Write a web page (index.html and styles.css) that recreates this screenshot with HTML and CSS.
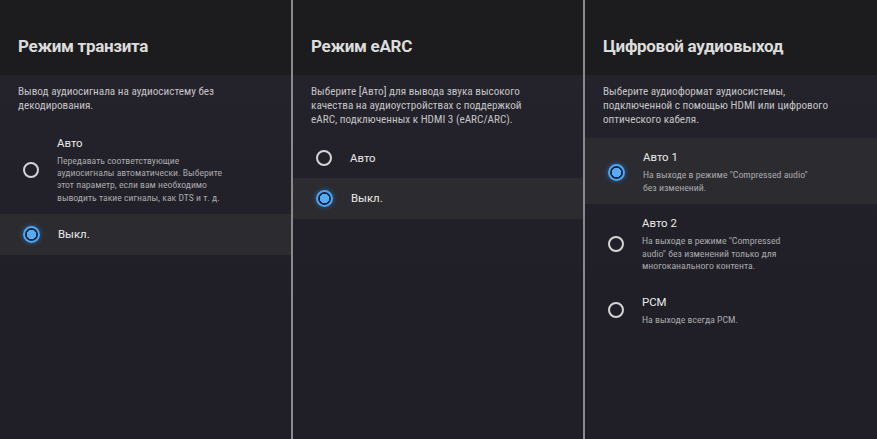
FILE: index.html
```html
<!DOCTYPE html>
<html lang="ru">
<head>
<meta charset="utf-8">
<title>Audio settings</title>
<link rel="stylesheet" href="styles.css">
</head>
<body>
<div class="screen">
  <section class="panel">
    <header class="panel-head"><h1 class="title">Режим транзита</h1></header>
    <div class="panel-body">
      <p class="desc">Вывод аудиосигнала на аудиосистему без<br>декодирования.</p>
      <ul class="options">
        <li class="option">
          <span class="radio"></span>
          <div class="opt-text">
            <div class="label">Авто</div>
            <div class="sub sub-tight">Передавать соответствующие<br>аудиосигналы автоматически. Выберите<br>этот параметр, если вам необходимо<br>выводить такие сигналы, как DTS и т. д.</div>
          </div>
        </li>
        <li class="option option-single focused">
          <span class="radio checked"></span>
          <div class="opt-text"><div class="label">Выкл.</div></div>
        </li>
      </ul>
    </div>
  </section>
  <section class="panel">
    <header class="panel-head"><h1 class="title">Режим eARC</h1></header>
    <div class="panel-body">
      <p class="desc">Выберите [Авто] для вывода звука высокого<br>качества на аудиоустройствах с поддержкой<br>eARC, подключенных к HDMI 3 (eARC/ARC).</p>
      <ul class="options">
        <li class="option option-single">
          <span class="radio"></span>
          <div class="opt-text"><div class="label">Авто</div></div>
        </li>
        <li class="option option-single focused">
          <span class="radio checked"></span>
          <div class="opt-text"><div class="label">Выкл.</div></div>
        </li>
      </ul>
    </div>
  </section>
  <section class="panel">
    <header class="panel-head"><h1 class="title">Цифровой аудиовыход</h1></header>
    <div class="panel-body">
      <p class="desc">Выберите аудиоформат аудиосистемы,<br>подключенной с помощью HDMI или цифрового<br>оптического кабеля.</p>
      <ul class="options">
        <li class="option focused">
          <span class="radio checked"></span>
          <div class="opt-text">
            <div class="label">Авто 1</div>
            <div class="sub">На выходе в режиме "Compressed audio"<br>без изменений.</div>
          </div>
        </li>
        <li class="option">
          <span class="radio"></span>
          <div class="opt-text">
            <div class="label">Авто 2</div>
            <div class="sub">На выходе в режиме "Compressed<br>audio" без изменений только для<br>многоканального контента.</div>
          </div>
        </li>
        <li class="option">
          <span class="radio"></span>
          <div class="opt-text">
            <div class="label">PCM</div>
            <div class="sub">На выходе всегда PCM.</div>
          </div>
        </li>
      </ul>
    </div>
  </section>
</div>
</body>
</html>
```

FILE: styles.css
```css
* { box-sizing: border-box; }
html, body { margin: 0; padding: 0; }
body {
  width: 877px;
  height: 439px;
  overflow: hidden;
  background: #201f27;
  font-family: Roboto, "Noto Sans", sans-serif;
  color: #e6e6e6;
}
.screen {
  display: grid;
  grid-template-columns: 291px 292px 1fr;
  height: 439px;
}
.panel {
  display: flex;
  flex-direction: column;
  background: #211f28;
  min-width: 0;
}
.panel + .panel {
  border-left: 2px solid #8a8a8e;
}
.panel-head {
  height: 75px;
  background: #1c1c1e;
  padding: 36px 0 0 18px;
}
.title {
  margin: 0;
  font-size: 17px;
  line-height: 21px;
  font-weight: 700;
  letter-spacing: -0.3px;
  color: #dcdcdc;
}
.panel-body {
  flex: 1;
  padding-top: 10px;
  background: linear-gradient(#24222a, #201f27 60%);
}
.desc {
  margin: 0 0 11px 18px;
  font-family: "Roboto Condensed", "Liberation Sans Narrow", Roboto, sans-serif;
  font-stretch: condensed;
  font-size: 11.2px;
  line-height: 14px;
  color: #c4c4c6;
}
.options {
  list-style: none;
  margin: 0;
  padding: 0;
}
.option {
  display: flex;
  align-items: center;
  gap: 18px;
  padding: 12px 0 10px 23px;
}
.option-single {
  padding: 12px 0 12px 23px;
}
.option.focused {
  background: #2c2c30;
}
.radio {
  flex: none;
  width: 16px;
  height: 16px;
  border: 2px solid #d4d4d6;
  border-radius: 50%;
}
.radio.checked {
  width: 17px;
  height: 17px;
  border-color: #4ea6f2;
  background: radial-gradient(circle, #55abf6 0 4.5px, #17263c 5px);
  box-shadow: 0 0 4px 1px rgba(40, 110, 190, 0.55);
}
.label {
  font-size: 11.4px;
  line-height: 15px;
  color: #eaeaea;
}
.sub {
  margin-top: 4px;
  font-family: "Roboto Condensed", "Liberation Sans Narrow", Roboto, sans-serif;
  font-stretch: condensed;
  font-size: 9.8px;
  line-height: 12.5px;
  color: #a9a9ad;
}
.sub-tight {
  font-size: 9.7px;
  line-height: 12.2px;
}
```
